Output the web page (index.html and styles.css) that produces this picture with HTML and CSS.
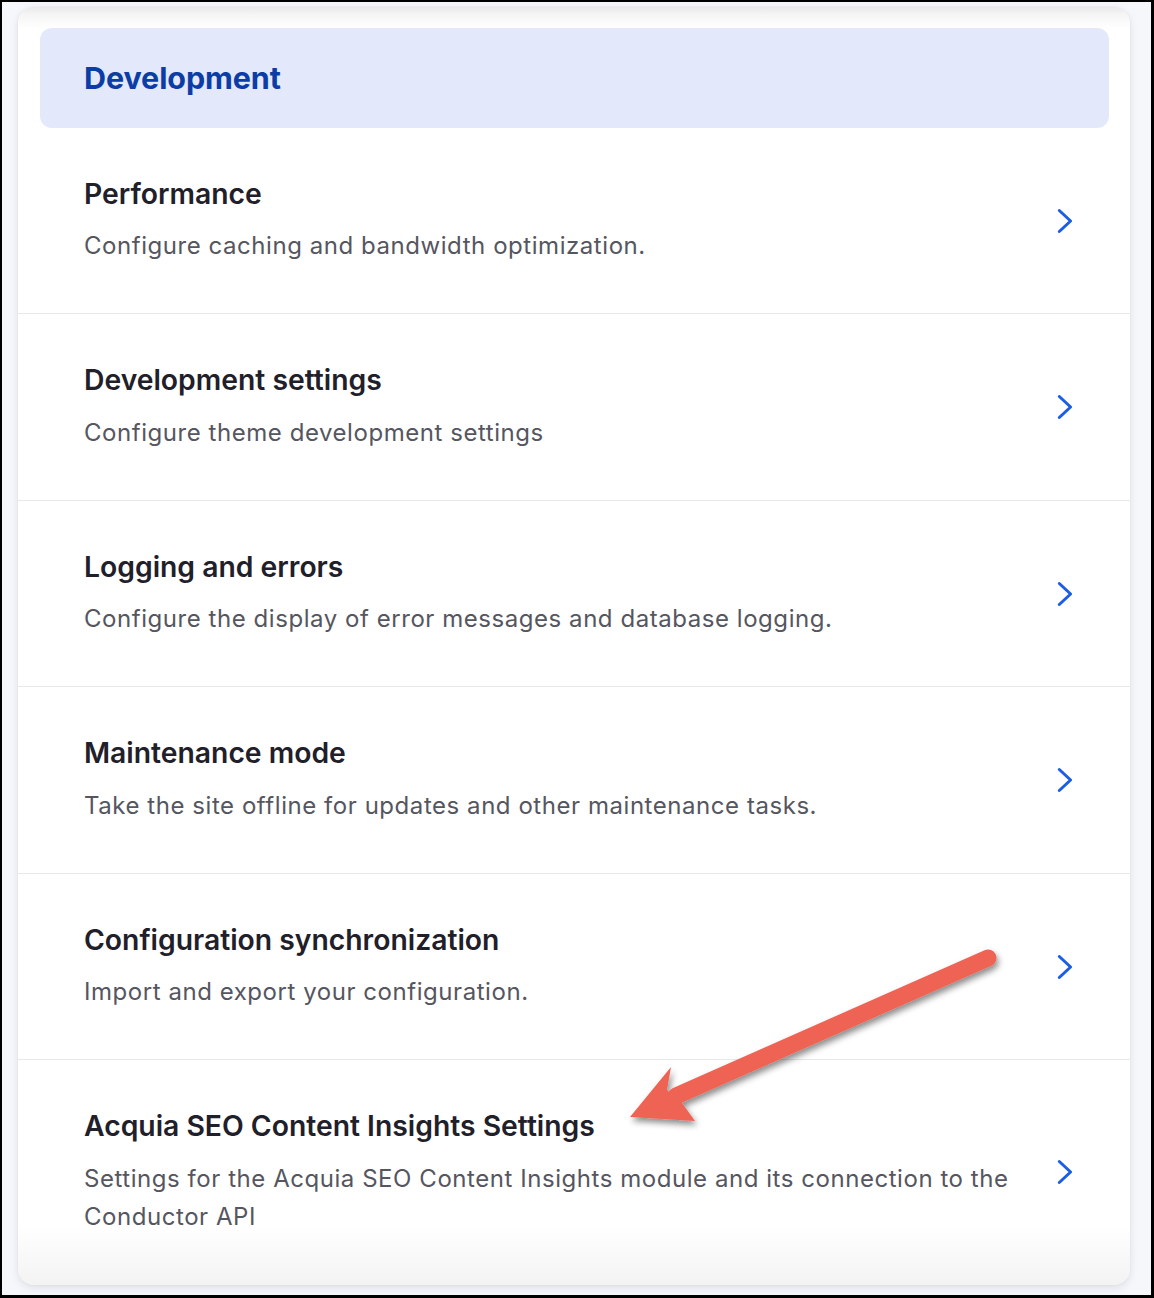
FILE: index.html
```html
<!DOCTYPE html>
<html lang="en">
<head>
<meta charset="utf-8">
<title>Development</title>
<link rel="stylesheet" href="styles.css">
</head>
<body>
<div class="frame">
  <div class="card">
    <div class="card-head">
      <div class="head-box"><h2 class="head-title">Development</h2></div>
    </div>
    <ul class="list">
      <li class="item">
        <div class="item-text">
          <div class="item-title">Performance</div>
          <div class="item-desc">Configure caching and bandwidth optimization.</div>
        </div>
        <svg class="chev" viewBox="0 0 16 26" width="16" height="26"><path d="M2.3 2.5 L13.6 13 L2.3 23.5"/></svg>
      </li>
      <li class="item">
        <div class="item-text">
          <div class="item-title">Development settings</div>
          <div class="item-desc">Configure theme development settings</div>
        </div>
        <svg class="chev" viewBox="0 0 16 26" width="16" height="26"><path d="M2.3 2.5 L13.6 13 L2.3 23.5"/></svg>
      </li>
      <li class="item">
        <div class="item-text">
          <div class="item-title">Logging and errors</div>
          <div class="item-desc">Configure the display of error messages and database logging.</div>
        </div>
        <svg class="chev" viewBox="0 0 16 26" width="16" height="26"><path d="M2.3 2.5 L13.6 13 L2.3 23.5"/></svg>
      </li>
      <li class="item">
        <div class="item-text">
          <div class="item-title">Maintenance mode</div>
          <div class="item-desc">Take the site offline for updates and other maintenance tasks.</div>
        </div>
        <svg class="chev" viewBox="0 0 16 26" width="16" height="26"><path d="M2.3 2.5 L13.6 13 L2.3 23.5"/></svg>
      </li>
      <li class="item">
        <div class="item-text">
          <div class="item-title">Configuration synchronization</div>
          <div class="item-desc">Import and export your configuration.</div>
        </div>
        <svg class="chev" viewBox="0 0 16 26" width="16" height="26"><path d="M2.3 2.5 L13.6 13 L2.3 23.5"/></svg>
      </li>
      <li class="item">
        <div class="item-text">
          <div class="item-title">Acquia SEO Content Insights Settings</div>
          <div class="item-desc">Settings for the Acquia SEO Content Insights module and its connection to the Conductor API</div>
        </div>
        <svg class="chev" viewBox="0 0 16 26" width="16" height="26"><path d="M2.3 2.5 L13.6 13 L2.3 23.5"/></svg>
      </li>
    </ul>
  </div>
</div>
<svg class="arrow" width="1154" height="1298" viewBox="0 0 1154 1298">
  <defs>
    <filter id="sh" x="-10%" y="-10%" width="130%" height="140%">
      <feDropShadow dx="2" dy="4" stdDeviation="3" flood-color="#000" flood-opacity="0.45"/>
    </filter>
  </defs>
  <g filter="url(#sh)" fill="#ee6352" stroke="none">
    <path d="M988 958 L676 1096" stroke="#ee6352" stroke-width="17" stroke-linecap="round" fill="none"/>
    <polygon points="630,1117 671,1067 667,1090 682,1103 695,1121"/>
  </g>
</svg>
</body>
</html>
```
FILE: styles.css
```css
* { box-sizing: border-box; }
html, body { margin: 0; padding: 0; }
body {
  font-family: Inter, "Noto Sans", "Liberation Sans", sans-serif;
  background: #000;
}
.frame {
  width: 1154px;
  height: 1298px;
  border-style: solid;
  border-color: #000;
  border-width: 2px 3px 3px 2px;
  background: #f6f7fb;
  overflow: hidden;
}
.card {
  margin: 5px 0 0 16px;
  width: 1112px;
  border-radius: 16px;
  background: linear-gradient(to bottom, #e9e9ea 0, #f6f6f6 8px, #ffffff 22px, #ffffff calc(100% - 60px), #f3f3f3 100%);
  box-shadow: 0 3px 8px rgba(20, 30, 60, 0.10), 0 0 0 1px rgba(0,0,0,0.02);
  padding-bottom: 1px;
}
.card-head {
  padding: 21px 21px 0 22px;
}
.head-box {
  height: 100px;
  border-radius: 12px;
  background: #e3e9fa;
  display: flex;
  align-items: center;
  padding-left: 44px;
}
.head-title {
  margin: 0;
  font-size: 30.5px;
  line-height: 38px;
  font-weight: 700;
  color: #0c3da6;
  letter-spacing: -0.1px;
}
.list {
  list-style: none;
  margin: 0;
  padding: 0;
}
.item {
  display: flex;
  align-items: center;
  padding: 48px 57px 48.2px 66px;
  border-bottom: 1px solid #e8e8ea;
}
.item:last-child { border-bottom: none; }
.item-text {
  flex: 1;
  display: flex;
  flex-direction: column;
  gap: 15.3px;
  padding-right: 30px;
}
.item-title {
  font-size: 28.3px;
  line-height: 36px;
  font-weight: 600;
  color: #1f2029;
}
.item-desc {
  font-size: 24px;
  line-height: 38px;
  font-weight: 400;
  letter-spacing: 0.55px;
  color: #55565f;
}
.chev {
  flex: none;
  display: block;
}
.chev path {
  fill: none;
  stroke: #1b5de4;
  stroke-width: 3;
  stroke-linecap: round;
  stroke-linejoin: round;
}
.arrow {
  position: absolute;
  left: 0;
  top: 0;
  pointer-events: none;
}
```
